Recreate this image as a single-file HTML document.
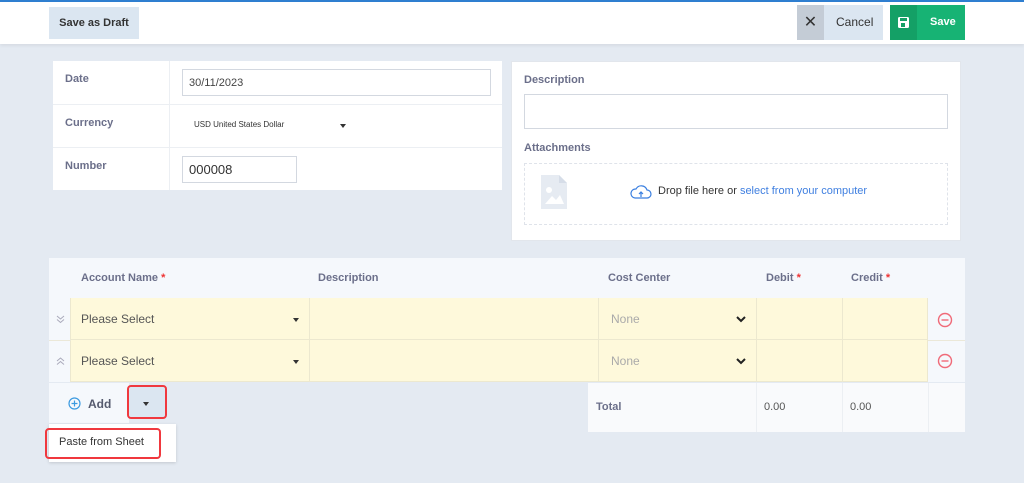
<!DOCTYPE html>
<html><head><meta charset="utf-8"><style>
*{box-sizing:border-box;margin:0;padding:0}
body{width:1024px;height:483px;overflow:hidden;background:#e4eaf2;font-family:"Liberation Sans",sans-serif;position:relative;font-size:12px;color:#3a3f4d}
.a{position:absolute}
.lbl{color:#6b6f8a;font-weight:bold;font-size:11px}
.inp{position:absolute;background:#fff;border:1px solid #d3d8e0}
.cell{position:absolute;border-right:1px solid #ece8cf;border-bottom:1px solid #ece8cf;background:#fef9db}
.caret{position:absolute;width:0;height:0;border-left:3px solid transparent;border-right:3px solid transparent;border-top:4px solid #333}
.req{color:#e33;}
</style></head><body>
<div class="a" style="left:0;top:0;width:1024px;height:2px;background:#2f7fd0"></div>
<div class="a" style="left:0;top:2px;width:1024px;height:42px;background:#fff;box-shadow:0 2px 3px rgba(0,0,0,.06)"></div>
<div class="a" style="left:49px;top:7px;width:90px;height:32px;background:#dbe6f1;font-weight:bold;font-size:11px;line-height:32px;text-align:center;color:#333">Save as Draft</div>
<div class="a" style="left:797px;top:5px;width:86px;height:35px;background:#dbe6f1"></div>
<div class="a" style="left:797px;top:5px;width:27px;height:35px;background:#c4ccd6;text-align:center;line-height:35px;font-size:16px;color:#333">✕</div>
<div class="a" style="left:836px;top:5px;line-height:35px;font-size:12px;color:#333">Cancel</div>
<div class="a" style="left:890px;top:5px;width:75px;height:35px;background:#17b374"></div>
<div class="a" style="left:890px;top:5px;width:27px;height:35px;background:#14a066"><svg width="27" height="35"><rect x="8" y="12" width="11" height="11" rx="1.5" fill="#fff"/><rect x="10" y="13" width="7" height="3" fill="#14a066"/><rect x="11" y="18" width="4" height="4" fill="#14a066"/></svg></div>
<div class="a" style="left:930px;top:5px;line-height:35px;font-size:11px;color:#fff;font-weight:bold">Save</div>

<div class="a" style="left:53px;top:61px;width:449px;height:129px;background:#fff"></div>
<div class="a" style="left:169px;top:61px;width:1px;height:129px;background:#eceff3"></div>
<div class="a" style="left:53px;top:104px;width:449px;height:1px;background:#eceff3"></div>
<div class="a" style="left:53px;top:147px;width:449px;height:1px;background:#eceff3"></div>
<div class="a lbl" style="left:65px;top:73px">Date</div>
<div class="a lbl" style="left:65px;top:117px">Currency</div>
<div class="a lbl" style="left:65px;top:160px">Number</div>
<div class="inp" style="left:182px;top:69px;width:309px;height:27px;font-size:11px;line-height:26px;padding-left:6px;color:#444">30/11/2023</div>
<div class="a" style="left:194px;top:120px;font-size:8px;color:#333">USD United States Dollar</div>
<div class="caret" style="left:340px;top:124px"></div>
<div class="inp" style="left:182px;top:156px;width:115px;height:27px;font-size:13px;line-height:26px;padding-left:6px;color:#333">000008</div>

<div class="a" style="left:511px;top:61px;width:450px;height:180px;background:#fff;border:1px solid #e2e6ec"></div>
<div class="a lbl" style="left:524px;top:74px">Description</div>
<div class="inp" style="left:524px;top:94px;width:424px;height:35px"></div>
<div class="a lbl" style="left:524px;top:142px">Attachments</div>
<div class="a" style="left:524px;top:163px;width:424px;height:62px;border:1px dashed #dfe3ea"></div>
<svg class="a" style="left:541px;top:174px" width="27" height="36"><path d="M0 1h18l8 8v26H0z" fill="#e6ebf2"/><path d="M18 1v8h8" fill="#d6dde8"/><circle cx="8" cy="16" r="3" fill="#fff"/><path d="M4 30l7-8 4 4 4-5 4 9z" fill="#fff"/></svg>
<svg class="a" style="left:630px;top:184px" width="22" height="16"><path d="M5 14h12a4 4 0 0 0 0-8 6 6 0 0 0-11-1 4.5 4.5 0 0 0-1 9z" fill="none" stroke="#3a7fe0" stroke-width="1.2"/><path d="M11 13V8M9 10l2-2 2 2" fill="none" stroke="#3a7fe0" stroke-width="1.2"/></svg>
<div class="a" style="left:658px;top:185px;font-size:11px;color:#333">Drop file here or <span style="color:#3f7fe0">select from your computer</span></div>

<div class="a" style="left:49px;top:258px;width:916px;height:40px;background:#f5f8fc"></div>
<div class="a lbl" style="left:81px;top:272px">Account Name <span class="req">*</span></div>
<div class="a lbl" style="left:318px;top:272px">Description</div>
<div class="a lbl" style="left:608px;top:272px">Cost Center</div>
<div class="a lbl" style="left:766px;top:272px">Debit <span class="req">*</span></div>
<div class="a lbl" style="left:851px;top:272px">Credit <span class="req">*</span></div>

<div class="a" style="left:49px;top:298px;width:22px;height:84px;background:#f5f8fc;border-right:1px solid #ece8cf"></div>
<div class="a" style="left:928px;top:298px;width:37px;height:84px;background:#f5f8fc"></div>
<div class="a" style="left:49px;top:340px;width:916px;height:1px;background:#ebe8d8"></div>

<div class="cell" style="left:71px;top:298px;width:239px;height:42px"></div>
<div class="cell" style="left:310px;top:298px;width:289px;height:42px"></div>
<div class="cell" style="left:599px;top:298px;width:158px;height:42px"></div>
<div class="cell" style="left:757px;top:298px;width:86px;height:42px"></div>
<div class="cell" style="left:843px;top:298px;width:85px;height:42px"></div>
<div class="cell" style="left:71px;top:340px;width:239px;height:42px"></div>
<div class="cell" style="left:310px;top:340px;width:289px;height:42px"></div>
<div class="cell" style="left:599px;top:340px;width:158px;height:42px"></div>
<div class="cell" style="left:757px;top:340px;width:86px;height:42px"></div>
<div class="cell" style="left:843px;top:340px;width:85px;height:42px"></div>
<svg class="a" style="left:56px;top:315px" width="9" height="9"><path d="M1 1l3.5 3 3.5-3M1 4.5l3.5 3 3.5-3" fill="none" stroke="#aab" stroke-width="1"/></svg>
<svg class="a" style="left:56px;top:357px" width="9" height="9"><path d="M1 4l3.5-3 3.5 3M1 7.5l3.5-3 3.5 3" fill="none" stroke="#aab" stroke-width="1"/></svg>

<div class="a" style="left:81px;top:312px;font-size:12px;color:#555">Please Select</div>
<div class="caret" style="left:293px;top:318px"></div>
<div class="a" style="left:81px;top:354px;font-size:12px;color:#555">Please Select</div>
<div class="caret" style="left:293px;top:360px"></div>
<div class="a" style="left:611px;top:312px;font-size:12px;color:#aaa">None</div>
<div class="a" style="left:611px;top:354px;font-size:12px;color:#aaa">None</div>
<svg class="a" style="left:735px;top:315px" width="12" height="8"><path d="M2 2l4 4 4-4" fill="none" stroke="#222" stroke-width="2"/></svg>
<svg class="a" style="left:735px;top:357px" width="12" height="8"><path d="M2 2l4 4 4-4" fill="none" stroke="#222" stroke-width="2"/></svg>
<svg class="a" style="left:937px;top:312px" width="16" height="16"><circle cx="8" cy="8" r="6.5" fill="none" stroke="#f06a78" stroke-width="1.4"/><path d="M4.5 8h7" stroke="#f06a78" stroke-width="1.4"/></svg>
<svg class="a" style="left:937px;top:353px" width="16" height="16"><circle cx="8" cy="8" r="6.5" fill="none" stroke="#f06a78" stroke-width="1.4"/><path d="M4.5 8h7" stroke="#f06a78" stroke-width="1.4"/></svg>

<div class="a" style="left:49px;top:383px;width:80px;height:40px;background:#f5f8fc"></div>
<svg class="a" style="left:68px;top:397px" width="13" height="13"><circle cx="6.5" cy="6.5" r="5.5" fill="none" stroke="#3b9ae0" stroke-width="1.2"/><path d="M6.5 3.5v6M3.5 6.5h6" stroke="#3b9ae0" stroke-width="1.2"/></svg>
<div class="a" style="left:88px;top:397px;font-size:12px;font-weight:bold;color:#555a6e">Add</div>
<div class="a" style="left:127px;top:385px;width:40px;height:34px;background:#dbe6f1;border:2px solid #f0383e;border-radius:4px"></div>
<div class="caret" style="left:143px;top:402px"></div>

<div class="a" style="left:49px;top:424px;width:127px;height:38px;background:#fff;box-shadow:0 1px 3px rgba(0,0,0,.15)"></div>
<div class="a" style="left:45px;top:428px;width:116px;height:31px;border:2px solid #f0383e;border-radius:4px"></div>
<div class="a" style="left:59px;top:436px;font-size:11px;color:#333">Paste from Sheet</div>

<div class="a" style="left:588px;top:383px;width:377px;height:49px;background:#f9fafc"></div>
<div class="a" style="left:756px;top:383px;width:1px;height:49px;background:#eceff3"></div>
<div class="a" style="left:842px;top:383px;width:1px;height:49px;background:#eceff3"></div>
<div class="a" style="left:928px;top:383px;width:1px;height:49px;background:#eceff3"></div>
<div class="a lbl" style="left:596px;top:401px">Total</div>
<div class="a" style="left:764px;top:401px;font-size:11px;color:#555">0.00</div>
<div class="a" style="left:850px;top:401px;font-size:11px;color:#555">0.00</div>
</body></html>
